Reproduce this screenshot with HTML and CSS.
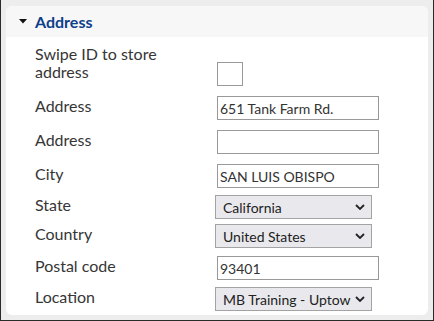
FILE: index.html
```html
<!DOCTYPE html>
<html lang="en">
<head>
<meta charset="utf-8">
<title>Address</title>
<link rel="stylesheet" href="styles.css">
</head>
<body>
<div class="frame">
  <section class="panel">
    <header class="panel-head">
      <svg class="caret" width="8" height="5" viewBox="0 0 8 5"><path d="M0 0 H8 L4 4.5 Z" fill="#111"/></svg>
      <h2 class="panel-title">Address</h2>
    </header>
    <div class="form">
      <div class="row row-swipe">
        <label class="lbl">Swipe ID to store<br>address</label>
        <div class="ctl"><input class="swipe" type="text"></div>
      </div>
      <div class="row row-input">
        <label class="lbl">Address</label>
        <div class="ctl"><input class="txt" type="text" value="651 Tank Farm Rd."></div>
      </div>
      <div class="row row-input">
        <label class="lbl">Address</label>
        <div class="ctl"><input class="txt" type="text" value=""></div>
      </div>
      <div class="row row-input">
        <label class="lbl">City</label>
        <div class="ctl"><input class="txt" type="text" value="SAN LUIS OBISPO"></div>
      </div>
      <div class="row">
        <label class="lbl">State</label>
        <div class="ctl"><select class="sel"><option>California</option></select></div>
      </div>
      <div class="row">
        <label class="lbl">Country</label>
        <div class="ctl"><select class="sel"><option>United States</option></select></div>
      </div>
      <div class="row row-input">
        <label class="lbl">Postal code</label>
        <div class="ctl"><input class="txt" type="text" value="93401"></div>
      </div>
      <div class="row">
        <label class="lbl">Location</label>
        <div class="ctl"><select class="sel"><option>MB Training - Uptown</option></select></div>
      </div>
    </div>
  </section>
</div>
</body>
</html>
```
FILE: styles.css
```css
html, body {
  margin: 0;
  padding: 0;
}
body {
  width: 434px;
  height: 321px;
  font-family: Lato, "Noto Sans", sans-serif;
  color: #333;
}
.frame {
  box-sizing: border-box;
  width: 434px;
  height: 321px;
  background: #ededed;
  border: 1px solid #2b2b2b;
  border-top: none;
  padding: 6px 5px 5px 5px;
  display: flex;
}
.panel {
  flex: 1;
  background: #fff;
  border-radius: 6px;
  overflow: hidden;
  display: flex;
  flex-direction: column;
}
.panel-head {
  height: 31px;
  background: #f7f7f7;
  display: flex;
  align-items: center;
  padding-left: 13px;
  gap: 8px;
}
.caret {
  display: block;
  margin-top: -1px;
}
.panel-title {
  margin: 0;
  font-size: 16px;
  font-weight: 700;
  color: #0d3f8a;
  line-height: 18px;
}
.form {
  padding: 7px 0 0 29px;
  display: flex;
  flex-direction: column;
  gap: 5px;
}
.row {
  display: flex;
  align-items: flex-start;
}
.row-input {
  padding: 3px 0 2px;
}
.lbl {
  width: 180px;
  flex: none;
  font-size: 16px;
  line-height: 18px;
  padding-top: 1px;
  color: #363636;
}
.ctl {
  display: flex;
}
.swipe {
  box-sizing: border-box;
  width: 26px;
  height: 24px;
  margin: 18px 0 2px 2px;
  border: 1px solid #999;
  padding: 0;
  background: #fff;
}
.txt {
  box-sizing: border-box;
  width: 162px;
  height: 24px;
  margin-left: 2px;
  border: 1px solid #999;
  padding: 1px 2px;
  font-family: Lato, "Noto Sans", sans-serif;
  font-size: 14px;
  color: #333;
  background: #fff;
  outline: none;
}
.sel {
  box-sizing: border-box;
  width: 157px;
  height: 24px;
  border: 1px solid #a3a3a3;
  border-radius: 0;
  background: #e9e9ed url("data:image/svg+xml,%3Csvg xmlns='http://www.w3.org/2000/svg' width='10' height='6' viewBox='0 0 10 6'%3E%3Cpath d='M1 1 L5 5 L9 1' fill='none' stroke='%23222' stroke-width='1.8'/%3E%3C/svg%3E") no-repeat right 6px center;
  -webkit-appearance: none;
  appearance: none;
  padding: 0 20px 0 7px;
  font-family: Lato, "Noto Sans", sans-serif;
  font-size: 14px;
  color: #222;
  white-space: nowrap;
  overflow: hidden;
}
```
